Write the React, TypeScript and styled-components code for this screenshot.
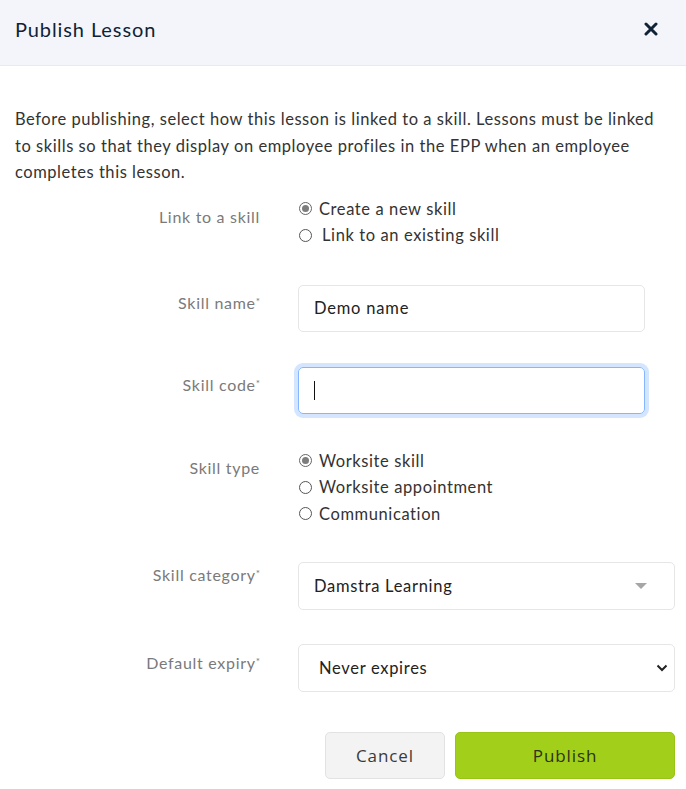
import React from "react";
import styled, { createGlobalStyle } from "styled-components";

const GlobalStyle = createGlobalStyle`
  * { box-sizing: border-box; }
  body {
    margin: 0;
    background: #ffffff;
    font-family: Lato, "Open Sans", sans-serif;
    color: #333333;
  }
`;

const Dialog = styled.div`
  width: 686px;
  height: 789px;
  background: #ffffff;
  display: flex;
  flex-direction: column;
`;

const Header = styled.div`
  height: 66px;
  display: flex;
  align-items: center;
  justify-content: space-between;
  padding: 0 28px 7px 15px;
  background: #f4f5fa;
  border-bottom: 1px solid #e9eaf0;
`;

const Title = styled.h1`
  margin: 0;
  font-size: 20px;
  font-weight: 400;
  letter-spacing: 0.9px;
  color: #0f2237;
`;

const CloseButton = styled.button`
  border: none;
  background: none;
  padding: 0;
  display: flex;
  color: #0f2237;
  cursor: pointer;
`;

const Body = styled.div`
  padding: 40px 11px 0 15px;
`;

const Intro = styled.p`
  margin: 0 14px 10px 0;
  font-size: 16.5px;
  line-height: 26.5px;
  letter-spacing: 0.55px;
  color: #333333;
`;

const Row = styled.div<{ $gap: number }>`
  display: grid;
  grid-template-columns: 245px 1fr;
  column-gap: 38px;
  margin-top: ${(p) => p.$gap}px;
`;

const Label = styled.label<{ $offset: number }>`
  text-align: right;
  font-size: 16px;
  line-height: 24px;
  letter-spacing: 0.7px;
  color: #7a7a7a;
  padding-top: ${(p) => p.$offset}px;
`;

const Required = styled.sup`
  font-size: 10px;
  vertical-align: top;
  position: relative;
  top: -2px;
  letter-spacing: 0;
`;

const RadioGroup = styled.div`
  display: flex;
  flex-direction: column;
`;

const RadioOption = styled.label<{ $indent?: number }>`
  display: flex;
  align-items: center;
  height: 26.5px;
  font-size: 16.5px;
  letter-spacing: 0.6px;
  color: #333333;
  gap: ${(p) => 7 + (p.$indent || 0)}px;
  padding-left: 1px;
`;

const RadioInput = styled.input.attrs({ type: "radio" })`
  appearance: none;
  margin: 0;
  width: 13px;
  height: 13px;
  border-radius: 50%;
  border: 1px solid #555555;
  background: #ffffff;
  display: grid;
  place-items: center;

  &:checked {
    border-color: #666666;
  }
  &:checked::after {
    content: "";
    width: 7px;
    height: 7px;
    border-radius: 50%;
    background: #7d7d7d;
  }
`;

const TextInput = styled.input`
  width: 347px;
  height: 47px;
  padding: 0 15px;
  font-family: Lato, "Open Sans", sans-serif;
  font-size: 16.5px;
  letter-spacing: 0.8px;
  color: #222222;
  border-radius: 5px;
  outline: none;
  border: 1px solid #e6e6e6;
`;

const FocusedInput = styled.div`
  width: 347px;
  height: 47px;
  padding: 0 15px;
  display: flex;
  align-items: center;
  border-radius: 5px;
  border: 1px solid #86b7fe;
  box-shadow: 0 0 0 4px rgba(13, 110, 253, 0.18);
`;

const Caret = styled.span`
  display: inline-block;
  width: 1px;
  height: 19px;
  background: #111111;
`;

const SelectBox = styled.div<{ $pad: number }>`
  width: 377px;
  height: 48px;
  display: flex;
  align-items: center;
  justify-content: space-between;
  padding: 0 ${(p) => p.$pad}px 0 15px;
  border: 1px solid #e6e6e6;
  border-radius: 5px;
  font-size: 16.5px;
  letter-spacing: 0.7px;
  color: #222222;
`;

const SelectText = styled.span<{ $indent?: number }>`
  padding-left: ${(p) => p.$indent || 0}px;
`;

const Actions = styled.div`
  display: flex;
  justify-content: flex-end;
  gap: 10px;
  margin-top: 40px;
`;

const Button = styled.button<{ $primary?: boolean }>`
  height: 47px;
  width: ${(p) => (p.$primary ? 220 : 120)}px;
  border-radius: 5px;
  font-family: "Open Sans", Lato, sans-serif;
  font-size: 17px;
  letter-spacing: 0.9px;
  color: ${(p) => (p.$primary ? "#2c3318" : "#3a3a3a")};
  background: ${(p) => (p.$primary ? "#a2cf19" : "#f3f3f3")};
  border: 1px solid ${(p) => (p.$primary ? "#98c416" : "#e2e2e2")};
  cursor: pointer;
`;

const App: React.FC = () => {
  return (
    <>
      <GlobalStyle />
      <Dialog>
        <Header>
          <Title>Publish Lesson</Title>
          <CloseButton aria-label="Close">
            <svg width="14" height="14" viewBox="0 0 14 14">
              <path
                d="M2 2 L12 12 M12 2 L2 12"
                stroke="currentColor"
                strokeWidth="3"
                strokeLinecap="round"
              />
            </svg>
          </CloseButton>
        </Header>

        <Body>
          <Intro>
            Before publishing, select how this lesson is linked to a skill.
            Lessons must be linked to skills so that they display on employee
            profiles in the EPP when an employee completes this lesson.
          </Intro>

          <Row $gap={10}>
            <Label $offset={9}>Link to a skill</Label>
            <RadioGroup>
              <RadioOption>
                <RadioInput name="link" defaultChecked />
                Create a new skill
              </RadioOption>
              <RadioOption $indent={3}>
                <RadioInput name="link" />
                Link to an existing skill
              </RadioOption>
            </RadioGroup>
          </Row>

          <Row $gap={36}>
            <Label $offset={6}>
              Skill name<Required>*</Required>
            </Label>
            <TextInput defaultValue="Demo name" />
          </Row>

          <Row $gap={35}>
            <Label $offset={6}>
              Skill code<Required>*</Required>
            </Label>
            <FocusedInput>
              <Caret />
            </FocusedInput>
          </Row>

          <Row $gap={34}>
            <Label $offset={8}>Skill type</Label>
            <RadioGroup>
              <RadioOption>
                <RadioInput name="type" defaultChecked />
                Worksite skill
              </RadioOption>
              <RadioOption>
                <RadioInput name="type" />
                Worksite appointment
              </RadioOption>
              <RadioOption>
                <RadioInput name="type" />
                Communication
              </RadioOption>
            </RadioGroup>
          </Row>

          <Row $gap={35}>
            <Label $offset={1}>
              Skill category<Required>*</Required>
            </Label>
            <SelectBox $pad={27}>
              <SelectText>Damstra Learning</SelectText>
              <svg width="12" height="7" viewBox="0 0 12 7">
                <path d="M0 0 H12 L6 6 Z" fill="#a6a6a6" />
              </svg>
            </SelectBox>
          </Row>

          <Row $gap={34}>
            <Label $offset={7}>
              Default expiry<Required>*</Required>
            </Label>
            <SelectBox $pad={6}>
              <SelectText $indent={5}>Never expires</SelectText>
              <svg width="12" height="8" viewBox="0 0 12 8">
                <path
                  d="M1.5 1.5 L6 6 L10.5 1.5"
                  stroke="#222222"
                  strokeWidth="2"
                  fill="none"
                />
              </svg>
            </SelectBox>
          </Row>

          <Actions>
            <Button>Cancel</Button>
            <Button $primary>Publish</Button>
          </Actions>
        </Body>
      </Dialog>
    </>
  );
};

export default App;
